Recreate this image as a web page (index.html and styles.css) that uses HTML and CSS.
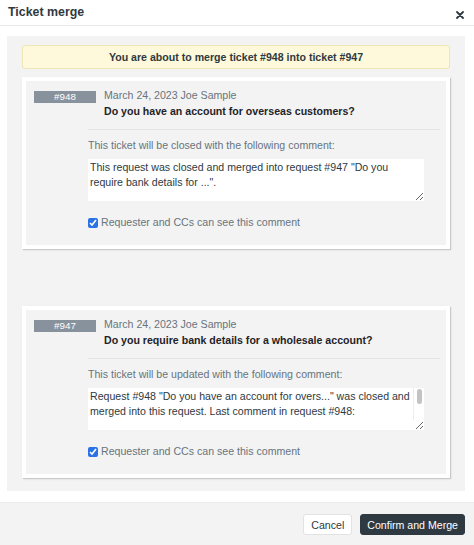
FILE: index.html
```html
<!DOCTYPE html>
<html lang="en">
<head>
<meta charset="utf-8">
<title>Ticket merge</title>
<link rel="stylesheet" href="styles.css">
</head>
<body>
<div class="modal">
  <header class="modal-header">
    <h1 class="modal-title">Ticket merge</h1>
    <button class="close" aria-label="Close">
      <svg width="8" height="8" viewBox="0 0 8 8"><path d="M1 1 L7 7 M7 1 L1 7" stroke="#2f3941" stroke-width="1.8" stroke-linecap="round"/></svg>
    </button>
  </header>
  <main class="modal-body">
    <div class="alert">You are about to merge ticket #948 into ticket #947</div>
    <section class="card">
      <div class="ticket-head">
        <span class="badge">#948</span>
        <div class="ticket-meta">
          <div class="meta">March 24, 2023 Joe Sample</div>
          <div class="subject">Do you have an account for overseas customers?</div>
        </div>
      </div>
      <div class="comment">
        <div class="label">This ticket will be closed with the following comment:</div>
        <div class="field-wrap">
          <textarea class="field" readonly>This request was closed and merged into request #947 "Do you require bank details for ...".</textarea>
        </div>
        <label class="check"><input type="checkbox" checked> Requester and CCs can see this comment</label>
      </div>
    </section>
    <section class="card card-target">
      <div class="ticket-head">
        <span class="badge">#947</span>
        <div class="ticket-meta">
          <div class="meta">March 24, 2023 Joe Sample</div>
          <div class="subject">Do you require bank details for a wholesale account?</div>
        </div>
      </div>
      <div class="comment">
        <div class="label">This ticket will be updated with the following comment:</div>
        <div class="field-wrap">
          <textarea class="field field-scroll" readonly>Request #948 "Do you have an account for overs..." was closed and merged into this request. Last comment in request #948:


Do you have an account for overseas customers? We are planning to expand our business and would like to know more about the options available.</textarea>
          <div class="scrollbar"><div class="thumb"></div></div>
        </div>
        <label class="check"><input type="checkbox" checked> Requester and CCs can see this comment</label>
      </div>
    </section>
  </main>
  <footer class="modal-footer">
    <button class="btn">Cancel</button>
    <button class="btn btn-primary">Confirm and Merge</button>
  </footer>
</div>
</body>
</html>
```
FILE: styles.css
```css
* { box-sizing: border-box; }
html, body { margin: 0; padding: 0; background: #fff; }
body {
  font-family: "Liberation Sans", Arial, Helvetica, sans-serif;
  font-size: 10.6px;
  color: #2f3941;
  width: 474px;
  height: 545px;
  overflow: hidden;
}
.modal { display: flex; flex-direction: column; height: 545px; }
.modal-header {
  height: 26px;
  border-bottom: 1px solid #e9e9e9;
  display: flex;
  align-items: flex-start;
  justify-content: space-between;
  padding: 0 10px 0 8px;
}
.modal-title {
  margin: 0;
  font-size: 12.4px;
  font-weight: bold;
  line-height: 24px;
  color: #2f3941;
}
.close {
  border: 0;
  background: none;
  padding: 0;
  margin-top: 11px;
  width: 8px;
  height: 8px;
  display: flex;
}
.modal-body {
  margin: 10px 9px 0 7px;
  background: #f3f3f3;
  padding: 9px 15px 13px 15px;
  display: flex;
  flex-direction: column;
}
.alert {
  height: 24px;
  background: #fdf9da;
  border: 1px solid #efe6b5;
  border-radius: 3px;
  text-align: center;
  font-weight: bold;
  line-height: 22px;
  color: #2f3941;
}
.card {
  margin-top: 8px;
  background: #f3f3f3;
  border: 4px solid #fff;
  box-shadow: 1px 1px 0 #c9c9c9, 1px 1px 2px rgba(0,0,0,0.12);
  padding: 7px 6px 15px 8px;
}
.card-target { margin-top: 57px; }
.ticket-head { display: flex; align-items: flex-start; gap: 8px; }
.badge {
  width: 62px;
  height: 12px;
  margin-top: 3px;
  background: #87929d;
  color: #fff;
  font-size: 9.8px;
  line-height: 12px;
  text-align: center;
}
.meta { color: #68737d; line-height: 15px; }
.subject { font-weight: bold; font-size: 10.6px; line-height: 16px; color: #1f2328; }
.comment {
  margin: 10px 0 0 54px;
  border-top: 1px solid #e4e4e4;
  padding-top: 8px;
}
.label { color: #68737d; line-height: 15px; }
.field-wrap {
  position: relative;
  margin-top: 6px;
  width: 336px;
  height: 42px;
}
.field {
  display: block;
  width: 100%;
  height: 42px;
  border: 0;
  background: #fff;
  padding: 1px 2px;
  font-family: inherit;
  font-size: 10.6px;
  line-height: 15px;
  color: #2f3941;
  resize: vertical;
  outline: none;
  overflow: hidden;
}
.field-scroll { padding-right: 12px; }
.scrollbar {
  position: absolute;
  top: 0;
  right: 0;
  width: 11px;
  height: 32px;
  background: #fff;
  border-left: 1px solid #ededed;
  padding: 1px 2px 0 3px;
}
.thumb {
  width: 5px;
  height: 15px;
  border-radius: 3px;
  background: #c3c3c3;
}
.check {
  display: flex;
  align-items: center;
  gap: 3px;
  margin-top: 14px;
  color: #68737d;
  line-height: 15px;
}
.check input {
  margin: 0;
  width: 10px;
  height: 10px;
  accent-color: #2a72e5;
}
.modal-footer {
  margin-top: 11px;
  flex: 1;
  background: #f3f3f3;
  border-top: 1px solid #ececec;
  display: flex;
  justify-content: flex-end;
  align-items: flex-start;
  gap: 8px;
  padding: 11px 9px 0 0;
}
.btn {
  height: 21px;
  padding: 0 7px;
  border: 1px solid #e2e2e2;
  border-radius: 3px;
  background: #fff;
  font-family: inherit;
  font-size: 10.6px;
  color: #2f3941;
}
.btn-primary {
  padding: 0 6px;
  background: #2f3941;
  border-color: #2f3941;
  color: #fff;
}
```
